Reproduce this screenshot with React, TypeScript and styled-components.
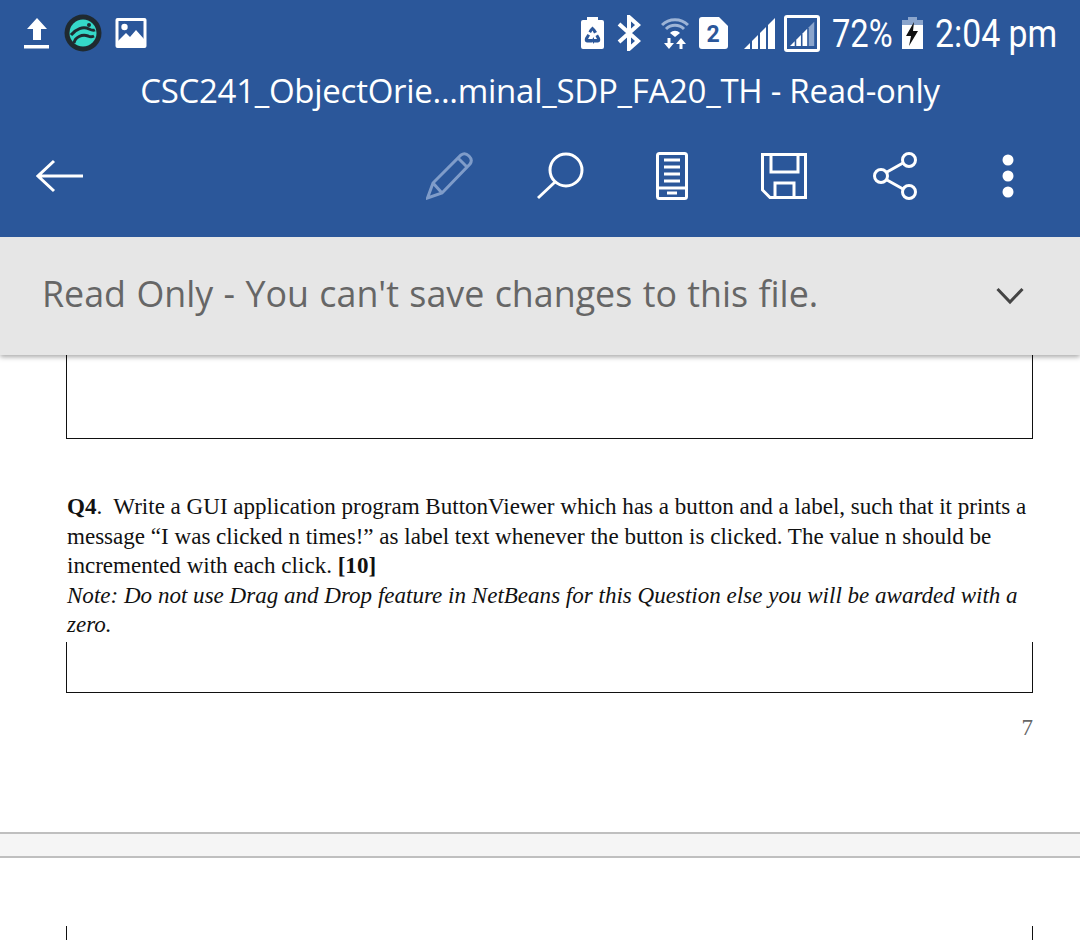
import { FC } from "react";
import styled, { createGlobalStyle } from "styled-components";

const Global = createGlobalStyle`
    html, body {
        margin: 0;
        padding: 0;
        background: #ffffff;
    }
`;

const Screen = styled.div`
    width: 1080px;
    height: 940px;
    overflow: hidden;
    position: relative;
    background: #fff;
`;

const Header = styled.header`
    height: 237px;
    background: #2b579a;
    display: flex;
    flex-direction: column;
    position: relative;
    z-index: 2;
`;

const StatusBar = styled.div`
    height: 66px;
    display: flex;
    align-items: center;
    justify-content: space-between;
    padding: 0 24px 0 23px;
`;

const StatusGroup = styled.div`
    display: flex;
    align-items: center;
`;

const StatusText = styled.span<{ $width: number; $left: number; $squeeze: number }>`
    display: block;
    width: ${props => props.$width}px;
    margin-left: ${props => props.$left}px;
    padding-top: 2px;
    font-family: Roboto, "Liberation Sans", sans-serif;
    font-size: 38px;
    color: #fff;
    white-space: nowrap;
    transform: scaleX(${props => props.$squeeze});
    transform-origin: left center;
`;

const Title = styled.div`
    height: 50px;
    text-align: center;
    font-family: "Open Sans", "Liberation Sans", sans-serif;
    font-size: 33px;
    line-height: 50px;
    letter-spacing: -0.27px;
    color: #fff;
    white-space: nowrap;
`;

const Toolbar = styled.div`
    height: 121px;
    display: flex;
    align-items: center;
    padding: 0 0 2px 36px;
    box-sizing: border-box;
`;

const ToolIcons = styled.div`
    display: flex;
    align-items: center;
    margin-left: 342px;
`;

const Svg = styled.svg<{ $left?: number }>`
    display: block;
    flex: none;
    margin-left: ${props => props.$left ?? 0}px;
`;

const Banner = styled.div`
    height: 118px;
    background: #e6e6e6;
    box-shadow: 0 2px 5px rgba(0, 0, 0, 0.35);
    display: flex;
    align-items: center;
    justify-content: space-between;
    padding: 0 56px 0 42px;
    position: relative;
    z-index: 1;
`;

const BannerText = styled.div`
    margin-bottom: 7px;
    font-family: "Open Sans", "Liberation Sans", sans-serif;
    font-size: 35.8px;
    word-spacing: 1.1px;
    color: #666;
    white-space: nowrap;
`;

const Page = styled.main`
    padding-left: 66px;
    width: 967px;
`;

const Box = styled.div<{ $height: number }>`
    height: ${props => props.$height}px;
    border: 1px solid #111;
    border-top: none;
`;

const Question = styled.section`
    margin-top: 53px;
    padding-left: 1px;
    font-family: "Liberation Serif", "Times New Roman", serif;
    font-size: 23.05px;
    color: #111;
    height: 150px;
`;

const Line = styled.div<{ $italic?: boolean }>`
    height: 29.5px;
    line-height: 29.5px;
    white-space: nowrap;
    font-style: ${props => (props.$italic ? "italic" : "normal")};
`;

const PageNumber = styled.div`
    font-family: "Liberation Serif", "Times New Roman", serif;
    font-size: 23px;
    line-height: 26px;
    color: #666;
    text-align: right;
    margin-top: 22px;
`;

const PageGap = styled.div`
    margin-top: 91px;
    height: 22px;
    background: #f5f5f5;
    border-top: 2px solid #bfbfbf;
    border-bottom: 2px solid #bfbfbf;
`;

const NextPage = styled.div`
    margin: 68px 47px 0 66px;
    height: 20px;
    border-left: 1px solid #111;
    border-right: 1px solid #111;
`;

const SignalWrap = styled.div`
    margin-left: 16px;
`;

const SignalFrame = styled.div`
    width: 30px;
    height: 28px;
    margin-left: 8px;
    padding-bottom: 3px;
    border: 3px solid #fff;
    border-radius: 3px;
    display: flex;
    align-items: flex-end;
    justify-content: center;
`;

const UploadIcon: FC = () => (
    <Svg width="28" height="32" viewBox="0 0 28 32" fill="#fff">
        <path d="M14 1 L24 12 H18 V23 H10 V12 H4 Z" />
        <rect x="1" y="28" width="25" height="3.5" />
    </Svg>
);

const AppIcon: FC = () => (
    <Svg width="38" height="38" viewBox="0 0 38 38" $left={13}>
        <circle cx="19" cy="19" r="18.5" fill="#1f2a30" />
        <circle cx="19" cy="19" r="13.5" fill="#35d8c8" />
        <path d="M7 21 C12 15 19 12 25 15 C27 16 29 17 31 16" stroke="#1f2a30" strokeWidth="3" fill="none" />
        <path d="M10 29 C11 23 18 20 24 22 C26 23 28 23 30 22" stroke="#1f2a30" strokeWidth="3" fill="none" />
        <circle cx="25" cy="11" r="2" fill="#1f2a30" />
    </Svg>
);

const PictureIcon: FC = () => (
    <Svg width="32" height="32" viewBox="0 0 32 32" $left={13}>
        <rect x="0.5" y="1" width="31" height="30" rx="2" fill="#fff" />
        <rect x="3.5" y="4" width="25" height="20" fill="#2b579a" />
        <circle cx="9.5" cy="10" r="3.2" fill="#fff" />
        <path d="M3 24 L11 16 L15 20 L21 13 L29 22 V28 H3 Z" fill="#fff" />
    </Svg>
);

const BatterySaver: FC = () => (
    <Svg width="23" height="32" viewBox="0 0 23 32">
        <path d="M6 0 H17 V3 H21 Q23 3 23 5 V30 Q23 32 21 32 H2 Q0 32 0 30 V5 Q0 3 2 3 H6 Z" fill="#fff" />
        <path d="M9 12 L11.5 9.5 L14 12 L16 15 L13 16.5 L11.5 13.5 L10 16 L7.5 14.5 Z" fill="#2b579a" />
        <path d="M4 21 L6.5 17 L9 18.5 L7 22 H11 V25.5 H6 Q3 25 4 21 Z" fill="#2b579a" />
        <path d="M19 21 L17 17.5 L14.5 19 L16 22 H13 V20 L10 23.5 L13 27 V25.5 H17 Q20 25 19 21 Z" fill="#2b579a" />
    </Svg>
);

const Bluetooth: FC = () => (
    <Svg width="24" height="36" viewBox="0 0 24 36" $left={13}>
        <path d="M2 9 L21 26 L12 34 V2 L21 10 L2 27" stroke="#fff" strokeWidth="4" fill="none" />
    </Svg>
);

const WifiIcon: FC = () => (
    <Svg width="28" height="32" viewBox="0 0 28 32" $left={20}>
        <path d="M1 8 C8 1 20 1 27 8" stroke="#9db4d6" strokeWidth="3" fill="none" />
        <path d="M5 12 C10 7 18 7 23 12" stroke="#9db4d6" strokeWidth="3" fill="none" />
        <path d="M9 16 C12 13 16 13 19 16 L14 20 Z" fill="#fff" />
        <path d="M8 32 L3 26 H6.5 V21 H9.5 V26 H13 Z M20 21 L25 27 H21.5 V32 H18.5 V27 H15 Z" fill="#fff" />
    </Svg>
);

const SimIcon: FC = () => (
    <Svg width="29" height="32" viewBox="0 0 29 32" $left={10}>
        <path d="M3 0 H20 L29 9 V29 Q29 32 26 32 H3 Q0 32 0 29 V3 Q0 0 3 0 Z" fill="#fff" />
        <text x="14" y="25" textAnchor="middle" fontFamily="Roboto, sans-serif" fontWeight="700" fontSize="23" fill="#2b579a">2</text>
    </Svg>
);

const SignalBars: FC<{ dimLast?: boolean; size: number }> = ({ dimLast, size }) => (
    <svg width={size} height={size} viewBox="0 0 32 32" style={{ display: "block" }}>
        <path d="M0 32 L6 26 V32 Z" fill="#fff" />
        <path d="M8 24 L14 18 V32 H8 Z" fill="#fff" />
        <path d="M16 16 L22 10 V32 H16 Z" fill="#fff" />
        <path d="M24 8 L31 1 V32 H24 Z" fill={dimLast ? "#8ba5cc" : "#fff"} />
    </svg>
);

const ChargingBattery: FC = () => (
    <Svg width="21" height="32" viewBox="0 0 21 32" $left={10}>
        <path d="M6 0 H15 V3 H21 V8 H0 V3 H6 Z" fill="#8ba5cc" />
        <rect x="0" y="8" width="21" height="24" fill="#fff" />
        <path d="M12 5 L4 19 H9 L7 29 L16 14 H11 Z" fill="#111" />
    </Svg>
);

const BackIcon: FC = () => (
    <Svg width="48" height="34" viewBox="0 0 48 34" fill="none" stroke="#fff" strokeWidth="3">
        <path d="M47 17 H3 M18 2 L2 17 L18 32" />
    </Svg>
);

const PencilIcon: FC = () => (
    <Svg width="48" height="48" viewBox="0 0 48 48" fill="none" stroke="#7f9cc9" strokeWidth="3">
        <path d="M1.5 46 L7 31 L35 3 Q39 0 43 4 Q47 8 44 12 L16 41 Z M7 31 L16 41 M32 6 L41 15" />
    </Svg>
);

const SearchIcon: FC = () => (
    <Svg width="48" height="48" viewBox="0 0 48 48" $left={62} fill="none" stroke="#fff" strokeWidth="3">
        <circle cx="30" cy="18" r="16" />
        <path d="M19 30 L2 46" />
    </Svg>
);

const ReaderIcon: FC = () => (
    <Svg width="32" height="48" viewBox="0 0 32 48" $left={72} fill="none" stroke="#fff" strokeWidth="3">
        <rect x="1.5" y="1.5" width="29" height="45" rx="2" />
        <path d="M1.5 36 H30.5 M8 8 H24 M8 15 H24 M8 22 H24 M8 29 H24 M11 41 H21" />
    </Svg>
);

const SaveIcon: FC = () => (
    <Svg width="46" height="46" viewBox="0 0 46 46" $left={73} fill="none" stroke="#fff" strokeWidth="3">
        <path d="M1.5 1.5 H44.5 V44.5 H9 L1.5 37 Z" />
        <path d="M10 1.5 V19 H37 V1.5 M14 44.5 V30 H33 V44.5" />
    </Svg>
);

const ShareIcon: FC = () => (
    <Svg width="44" height="48" viewBox="0 0 44 48" $left={66} fill="none" stroke="#fff" strokeWidth="3">
        <circle cx="8" cy="24" r="6.5" />
        <circle cx="36" cy="8" r="6.5" />
        <circle cx="36" cy="40" r="6.5" />
        <path d="M14 20 L30 11 M14 28 L30 37" />
    </Svg>
);

const MoreIcon: FC = () => (
    <Svg width="12" height="44" viewBox="0 0 12 44" $left={85} fill="#fff">
        <circle cx="6" cy="6" r="5.5" />
        <circle cx="6" cy="22" r="5.5" />
        <circle cx="6" cy="38" r="5.5" />
    </Svg>
);

const Chevron: FC = () => (
    <Svg width="28" height="18" viewBox="0 0 28 18" fill="none" stroke="#444" strokeWidth="3">
        <path d="M1.5 2 L14 15 L26.5 2" />
    </Svg>
);

export default function App() {
    return (
        <Screen>
            <Global />
            <Header>
                <StatusBar>
                    <StatusGroup>
                        <UploadIcon />
                        <AppIcon />
                        <PictureIcon />
                    </StatusGroup>
                    <StatusGroup>
                        <BatterySaver />
                        <Bluetooth />
                        <WifiIcon />
                        <SimIcon />
                        <SignalWrap>
                            <SignalBars size={32} />
                        </SignalWrap>
                        <SignalFrame>
                            <SignalBars size={25} dimLast />
                        </SignalFrame>
                        <StatusText $width={60} $left={12} $squeeze={0.86}>72%</StatusText>
                        <ChargingBattery />
                        <StatusText $width={121} $left={12} $squeeze={0.89}>2:04 pm</StatusText>
                    </StatusGroup>
                </StatusBar>
                <Title>CSC241_ObjectOrie...minal_SDP_FA20_TH - Read-only</Title>
                <Toolbar>
                    <BackIcon />
                    <ToolIcons>
                        <PencilIcon />
                        <SearchIcon />
                        <ReaderIcon />
                        <SaveIcon />
                        <ShareIcon />
                        <MoreIcon />
                    </ToolIcons>
                </Toolbar>
            </Header>
            <Banner>
                <BannerText>Read Only - You can't save changes to this file.</BannerText>
                <Chevron />
            </Banner>
            <Page>
                <Box $height={83} />
                <Question>
                    <Line><b>Q4</b>.&nbsp; Write a GUI application program ButtonViewer which has a button and a label, such that it prints a</Line>
                    <Line>message “I was clicked n times!” as label text whenever the button is clicked. The value n should be</Line>
                    <Line>incremented with each click. <b>[10]</b></Line>
                    <Line $italic>Note: Do not use Drag and Drop feature in NetBeans for this Question else you will be awarded with a</Line>
                    <Line $italic>zero.</Line>
                </Question>
                <Box $height={50} />
                <PageNumber>7</PageNumber>
            </Page>
            <PageGap />
            <NextPage />
        </Screen>
    );
}
